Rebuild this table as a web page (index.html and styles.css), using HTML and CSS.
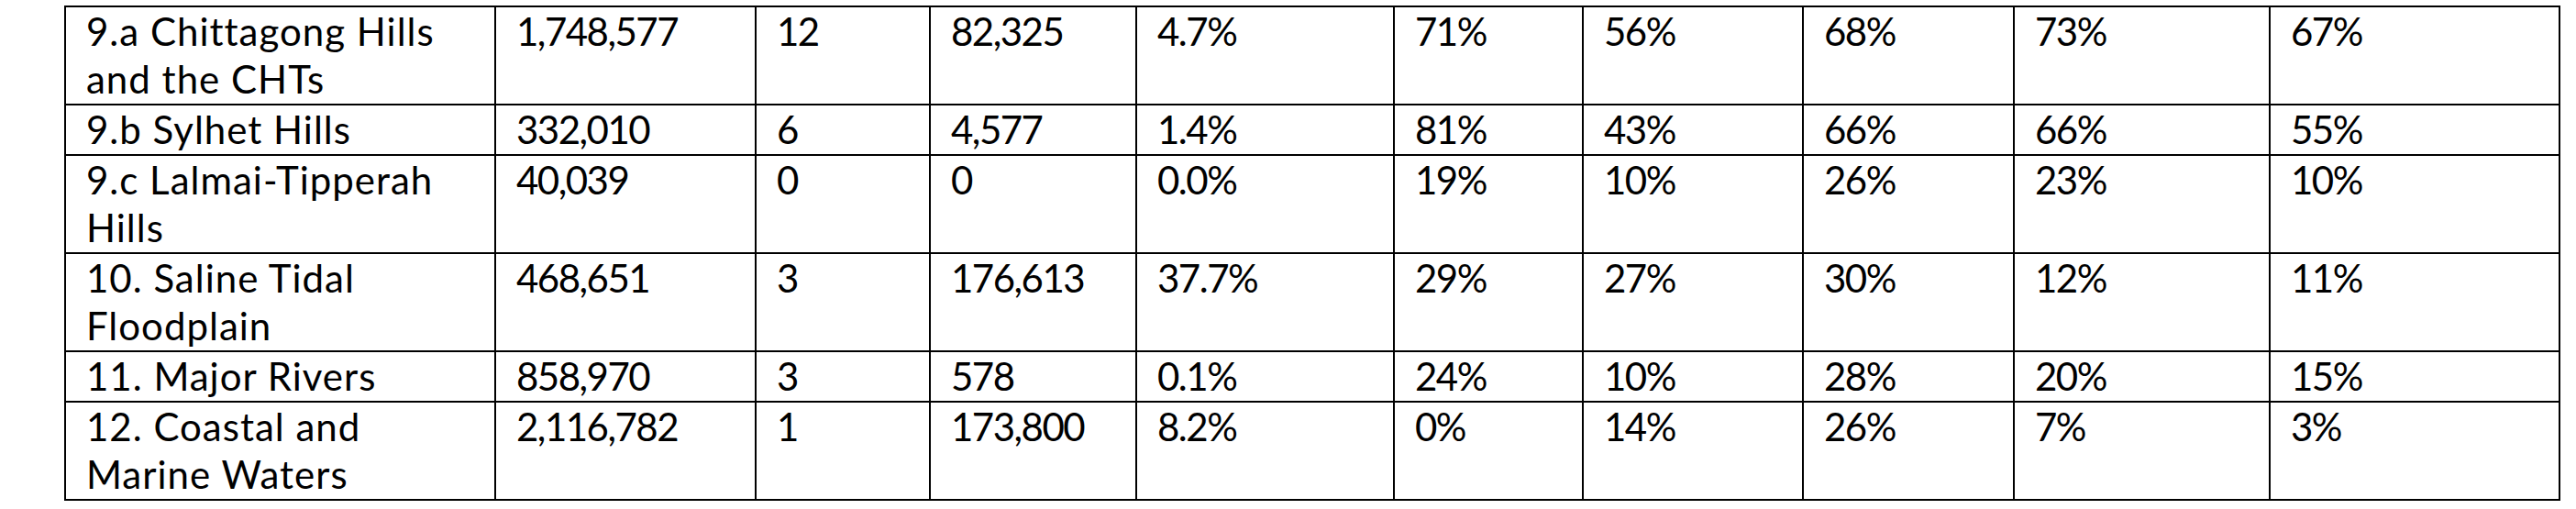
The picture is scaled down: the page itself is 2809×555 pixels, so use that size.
FILE: index.html
```html
<!DOCTYPE html>
<html lang="en">
<head>
<meta charset="utf-8">
<title>Ecosystem table</title>
<link rel="stylesheet" href="styles.css">
</head>
<body>
<div class="page">
<table class="data">
<colgroup>
<col class="c1"><col class="c2"><col class="c3"><col class="c4"><col class="c5">
<col class="c6"><col class="c7"><col class="c8"><col class="c9"><col class="c10">
</colgroup>
<tbody>
<tr><td class="name">9.a Chittagong Hills and the CHTs</td><td>1,748,577</td><td>12</td><td>82,325</td><td>4.7%</td><td>71%</td><td>56%</td><td>68%</td><td>73%</td><td>67%</td></tr>
<tr><td class="name">9.b Sylhet Hills</td><td>332,010</td><td>6</td><td>4,577</td><td>1.4%</td><td>81%</td><td>43%</td><td>66%</td><td>66%</td><td>55%</td></tr>
<tr><td class="name">9.c Lalmai-Tipperah Hills</td><td>40,039</td><td>0</td><td>0</td><td>0.0%</td><td>19%</td><td>10%</td><td>26%</td><td>23%</td><td>10%</td></tr>
<tr><td class="name">10. Saline Tidal Floodplain</td><td>468,651</td><td>3</td><td>176,613</td><td>37.7%</td><td>29%</td><td>27%</td><td>30%</td><td>12%</td><td>11%</td></tr>
<tr><td class="name">11. Major Rivers</td><td>858,970</td><td>3</td><td>578</td><td>0.1%</td><td>24%</td><td>10%</td><td>28%</td><td>20%</td><td>15%</td></tr>
<tr><td class="name">12. Coastal and Marine Waters</td><td>2,116,782</td><td>1</td><td>173,800</td><td>8.2%</td><td>0%</td><td>14%</td><td>26%</td><td>7%</td><td>3%</td></tr>
</tbody>
</table>
</div>
</body>
</html>
```
FILE: styles.css
```css
html, body {
  margin: 0;
  padding: 0;
  background: #ffffff;
}
.page {
  padding: 6px 0 0 70px;
}
.data {
  border-collapse: collapse;
  table-layout: fixed;
  width: 2722px;
  font-family: "Lato", "Liberation Sans", sans-serif;
  font-size: 42px;
  color: #000000;
}
.data td {
  border: 2px solid #000000;
  padding: 0 10px 1px 22px;
  line-height: 52px;
  vertical-align: top;
  text-align: left;
  letter-spacing: -1.5px;
  white-space: nowrap;
}
.data td.name {
  letter-spacing: 1px;
  padding-right: 40px;
  white-space: normal;
}
.c1 { width: 469px; }
.c2 { width: 284px; }
.c3 { width: 190px; }
.c4 { width: 225px; }
.c5 { width: 281px; }
.c6 { width: 206px; }
.c7 { width: 240px; }
.c8 { width: 230px; }
.c9 { width: 279px; }
.c10 { width: 316px; }
```
